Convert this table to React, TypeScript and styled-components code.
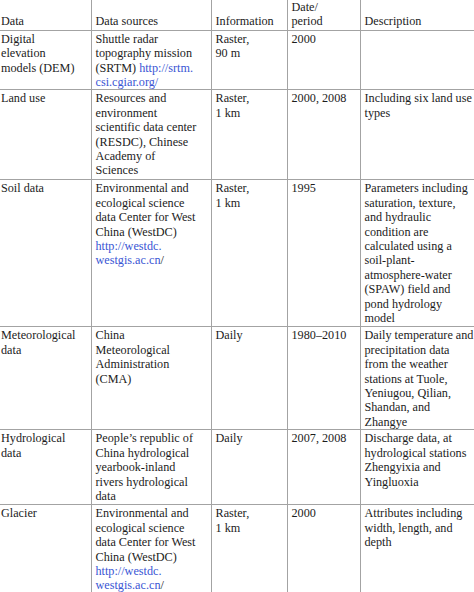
import React, { ReactNode } from "react";
import styled, { createGlobalStyle } from "styled-components";

const GlobalStyle = createGlobalStyle`
  html, body {
    margin: 0;
    padding: 0;
    background: #fff;
    overflow: hidden;
  }
`;

const Page = styled.div`
  width: 474px;
  height: 592px;
  overflow: hidden;
`;

const Table = styled.table`
  border-collapse: collapse;
  table-layout: fixed;
  width: 500px;
  font-family: "Liberation Serif", "Times New Roman", serif;
  font-size: 12.2px;
  line-height: 14.4px;
  color: #1c1c1c;
`;

const Row = styled.tr<{ $h: number }>`
  height: ${(p) => p.$h}px;
`;

const HeadCell = styled.th<{ $first?: boolean; $last?: boolean }>`
  font-weight: normal;
  text-align: left;
  vertical-align: bottom;
  white-space: nowrap;
  padding: 0 0 1px ${(p) => (p.$first ? "1px" : "4px")};
  border-bottom: 1px solid #a3a3a3;
  border-right: ${(p) => (p.$last ? "none" : "1px solid #a3a3a3")};
`;

const Cell = styled.td<{ $first?: boolean; $last?: boolean }>`
  vertical-align: top;
  white-space: nowrap;
  overflow: visible;
  padding: 1px 0 0 ${(p) => (p.$first ? "1px" : "4px")};
  border-bottom: 1px solid #a3a3a3;
  border-right: ${(p) => (p.$last ? "none" : "1px solid #a3a3a3")};
`;

const Link = styled.span`
  color: #3a56d4;
`;

const widths = [91, 120, 76, 73, 140];

type RowData = { h: number; cells: ReactNode[][] };

const rows: RowData[] = [
  {
    h: 59,
    cells: [
      ["Digital", "elevation", "models (DEM)"],
      [
        "Shuttle radar",
        "topography mission",
        <>
          (SRTM) <Link>http://srtm.</Link>
        </>,
        <Link>csi.cgiar.org/</Link>,
      ],
      ["Raster,", "90 m"],
      ["2000"],
      [],
    ],
  },
  {
    h: 90,
    cells: [
      ["Land use"],
      [
        "Resources and",
        "environment",
        "scientific data center",
        "(RESDC), Chinese",
        "Academy of",
        "Sciences",
      ],
      ["Raster,", "1 km"],
      ["2000, 2008"],
      ["Including six land use", "types"],
    ],
  },
  {
    h: 147,
    cells: [
      ["Soil data"],
      [
        "Environmental and",
        "ecological science",
        "data Center for West",
        "China (WestDC)",
        <Link>http://westdc.</Link>,
        <>
          <Link>westgis.ac.cn</Link>/
        </>,
      ],
      ["Raster,", "1 km"],
      ["1995"],
      [
        "Parameters including",
        "saturation, texture,",
        "and hydraulic",
        "condition are",
        "calculated using a",
        "soil-plant-",
        "atmosphere-water",
        "(SPAW) field and",
        "pond hydrology",
        "model",
      ],
    ],
  },
  {
    h: 103,
    cells: [
      ["Meteorological", "data"],
      ["China", "Meteorological", "Administration", "(CMA)"],
      ["Daily"],
      ["1980\u20132010"],
      [
        "Daily temperature and",
        "precipitation data",
        "from the weather",
        "stations at Tuole,",
        "Yeniugou, Qilian,",
        "Shandan, and",
        "Zhangye",
      ],
    ],
  },
  {
    h: 75,
    cells: [
      ["Hydrological", "data"],
      [
        "People\u2019s republic of",
        "China hydrological",
        "yearbook-inland",
        "rivers hydrological",
        "data",
      ],
      ["Daily"],
      ["2007, 2008"],
      [
        "Discharge data, at",
        "hydrological stations",
        "Zhengyixia and",
        "Yingluoxia",
      ],
    ],
  },
  {
    h: 100,
    cells: [
      ["Glacier"],
      [
        "Environmental and",
        "ecological science",
        "data Center for West",
        "China (WestDC)",
        <Link>http://westdc.</Link>,
        <>
          <Link>westgis.ac.cn</Link>/
        </>,
      ],
      ["Raster,", "1 km"],
      ["2000"],
      ["Attributes including", "width, length, and", "depth"],
    ],
  },
];

const Lines: React.FC<{ lines: ReactNode[] }> = ({ lines }) => (
  <>
    {lines.map((l, i) => (
      <React.Fragment key={i}>
        {i > 0 && <br />}
        {l}
      </React.Fragment>
    ))}
  </>
);

const headers: ReactNode[][] = [
  ["Data"],
  ["Data sources"],
  ["Information"],
  ["Date/", "period"],
  ["Description"],
];

export default function App() {
  return (
    <Page>
      <GlobalStyle />
      <Table>
        <colgroup>
          {widths.map((w, i) => (
            <col key={i} style={{ width: w }} />
          ))}
        </colgroup>
        <thead>
          <Row $h={28}>
            {headers.map((h, i) => (
              <HeadCell key={i} $first={i === 0} $last={i === headers.length - 1}>
                <Lines lines={h} />
              </HeadCell>
            ))}
          </Row>
        </thead>
        <tbody>
          {rows.map((r, ri) => (
            <Row key={ri} $h={r.h}>
              {r.cells.map((c, ci) => (
                <Cell key={ci} $first={ci === 0} $last={ci === r.cells.length - 1}>
                  <Lines lines={c} />
                </Cell>
              ))}
            </Row>
          ))}
        </tbody>
      </Table>
    </Page>
  );
}
